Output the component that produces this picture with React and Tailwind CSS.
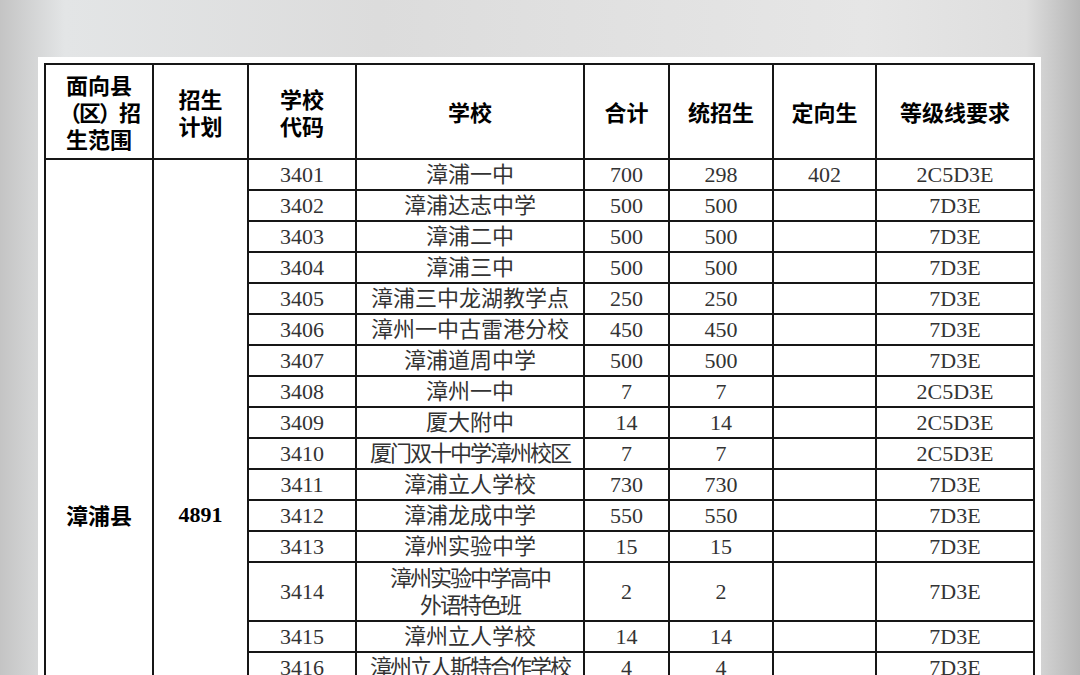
import React from 'react';

const rows = [
    ['3401', '漳浦一中', '700', '298', '402', '2C5D3E'],
    ['3402', '漳浦达志中学', '500', '500', '', '7D3E'],
    ['3403', '漳浦二中', '500', '500', '', '7D3E'],
    ['3404', '漳浦三中', '500', '500', '', '7D3E'],
    ['3405', '漳浦三中龙湖教学点', '250', '250', '', '7D3E'],
    ['3406', '漳州一中古雷港分校', '450', '450', '', '7D3E'],
    ['3407', '漳浦道周中学', '500', '500', '', '7D3E'],
    ['3408', '漳州一中', '7', '7', '', '2C5D3E'],
    ['3409', '厦大附中', '14', '14', '', '2C5D3E'],
    ['3410', '厦门双十中学漳州校区', '7', '7', '', '2C5D3E'],
    ['3411', '漳浦立人学校', '730', '730', '', '7D3E'],
    ['3412', '漳浦龙成中学', '550', '550', '', '7D3E'],
    ['3413', '漳州实验中学', '15', '15', '', '7D3E'],
    ['3414', '漳州实验中学高中\n外语特色班', '2', '2', '', '7D3E'],
    ['3415', '漳州立人学校', '14', '14', '', '7D3E'],
    ['3416', '漳州立人斯特合作学校', '4', '4', '', '7D3E'],
];

const cell = 'border-2 border-[#161616] p-0 text-center align-middle';
const head = `${cell} font-['Noto_Sans_CJK_SC',sans-serif] font-bold text-[22px] leading-[27px] text-black`;

export default function App() {
    return (
        <div className="h-[675px] w-[1080px] overflow-hidden bg-[linear-gradient(90deg,#c4c4c4_0%,#e3e5e6_6%,#dcdcdc_35%,#e6e6e6_80%,#dedede_95%,#b6b6b6_100%)]">
            <div className="ml-[38px] mt-[57px] w-[1003px] bg-white pl-[6px] pt-[6px] pb-[20px]">
                <table className="w-[989px] table-fixed border-collapse">
                    <colgroup>
                        <col className="w-[108px]" />
                        <col className="w-[95px]" />
                        <col className="w-[108px]" />
                        <col className="w-[228px]" />
                        <col className="w-[85px]" />
                        <col className="w-[104px]" />
                        <col className="w-[103px]" />
                        <col className="w-[158px]" />
                    </colgroup>
                    <thead>
                        <tr className="h-[95px]">
                            <th className={head}>面向县<br /><span className="tracking-[-2px]">（区）招</span><br />生范围</th>
                            <th className={head}>招生<br />计划</th>
                            <th className={head}>学校<br />代码</th>
                            <th className={head}>学校</th>
                            <th className={head}>合计</th>
                            <th className={head}>统招生</th>
                            <th className={head}>定向生</th>
                            <th className={head}>等级线要求</th>
                        </tr>
                    </thead>
                    <tbody className="font-['Liberation_Serif','Noto_Sans_CJK_SC',serif] text-[22px] text-[#333]">
                        {rows.map((r, i) => {
                            const tall = r[1].includes('\n');
                            return (
                                <tr key={r[0]} className={tall ? 'h-[59px]' : 'h-[31px]'}>
                                    {i === 0 && (
                                        <>
                                            <td rowSpan={rows.length} className={`${cell} align-top pt-[339px] font-['Noto_Sans_CJK_SC',sans-serif] font-bold text-[22px] leading-[31px] text-black`}>
                                                漳浦县
                                            </td>
                                            <td rowSpan={rows.length} className={`${cell} align-top pt-[339px] font-['Liberation_Serif',serif] font-bold text-[22px] leading-[31px] text-black`}>
                                                4891
                                            </td>
                                        </>
                                    )}
                                    <td className={`${cell} leading-[27px]`}>{r[0]}</td>
                                    <td className={`${cell} leading-[27px] whitespace-pre-line ${r[1].length >= 10 ? 'tracking-[-2px] whitespace-nowrap' : ''}`}>{r[1]}</td>
                                    <td className={`${cell} leading-[27px]`}>{r[2]}</td>
                                    <td className={`${cell} leading-[27px]`}>{r[3]}</td>
                                    <td className={`${cell} leading-[27px]`}>{r[4]}</td>
                                    <td className={`${cell} leading-[27px]`}>{r[5]}</td>
                                </tr>
                            );
                        })}
                    </tbody>
                </table>
            </div>
        </div>
    );
}
